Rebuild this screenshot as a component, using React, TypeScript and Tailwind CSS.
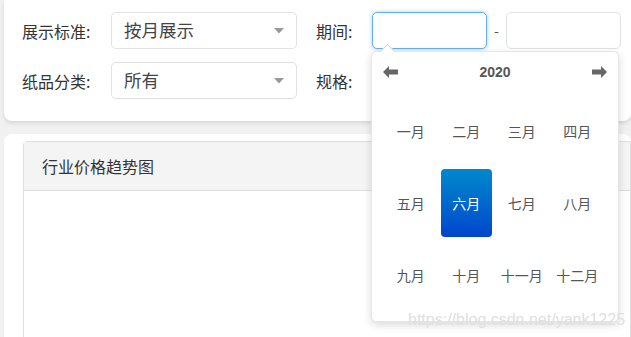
import React from "react";

const months = ["一月", "二月", "三月", "四月", "五月", "六月", "七月", "八月", "九月", "十月", "十一月", "十二月"];

function Caret() {
  return (
    <svg width="10" height="6" viewBox="0 0 10 6" className="shrink-0">
      <path d="M0 0 L10 0 L5 5.5 Z" fill="#999" />
    </svg>
  );
}

function Arrow({ dir }: { dir: "left" | "right" }) {
  return (
    <svg width="16" height="12" viewBox="0 0 16 12" className={dir === "right" ? "rotate-180" : ""}>
      <path d="M0 6 L6 0 L6 3.5 L15 3.5 L15 8.5 L6 8.5 L6 12 Z" fill="#666" />
    </svg>
  );
}

function Select({ value }: { value: string }) {
  return (
    <div className="flex h-[37px] w-[186px] items-center justify-between rounded-[5px] border border-[#e2e2e2] bg-white pl-3 pr-[12px]">
      <span className="text-[17.5px] text-[#444]">{value}</span>
      <Caret />
    </div>
  );
}

function MonthPicker() {
  return (
    <div className="absolute left-[-1px] top-[39px] z-10 w-[248px] rounded-[5px] border border-[#e6e6e6] bg-white px-[11px] pb-[12px] shadow-[0_3px_8px_rgba(0,0,0,0.15)]">
      <div className="absolute left-[10px] top-[-6px] h-[11px] w-[11px] rotate-45 border-l border-t border-[#d6d6d6] bg-white" />
      <div className="flex h-[40px] items-center justify-between pr-0">
        <Arrow dir="left" />
        <span className="font-['Liberation_Sans',sans-serif] text-[14px] font-bold text-[#555]">2020</span>
        <Arrow dir="right" />
      </div>
      <div className="mt-[5px] grid grid-cols-4 gap-y-[4px] pr-[2px]">
        {months.map((m) => (
          <div key={m} className="flex h-[68px] items-center justify-center">
            {m === "六月" ? (
              <div className="flex h-[68px] w-[51px] items-center justify-center rounded-[4px] bg-gradient-to-b from-[#0088cc] to-[#0044cc] text-[14px] text-white">
                {m}
              </div>
            ) : (
              <span className="text-[14px] text-[#555]">{m}</span>
            )}
          </div>
        ))}
      </div>
    </div>
  );
}

export default function App() {
  return (
    <div className="relative h-[337px] overflow-hidden bg-[#f1f1f1] font-['Noto_Sans_CJK_SC','Liberation_Sans',sans-serif]">
      {/* Filter card */}
      <div className="ml-1 h-[121px] rounded-b-[8px] bg-white pl-[18px] pt-3 shadow-[0_2px_4px_rgba(0,0,0,0.12)]">
        <div className="flex h-[37px] items-center">
          <span className="w-[89px] text-[16px] text-[#333]">展示标准:</span>
          <Select value="按月展示" />
          <span className="ml-[19px] w-[56px] text-[16px] text-[#333]">期间:</span>
          <div className="relative">
            <div className="h-[37px] w-[115px] rounded-[5px] border border-[#66afe9] bg-white shadow-[0_0_4px_rgba(102,175,233,0.6)]" />
            <MonthPicker />
          </div>
          <span className="w-[19px] text-center text-[14px] text-[#555]">-</span>
          <div className="h-[37px] w-[115px] rounded-[5px] border border-[#e2e2e2] bg-white" />
        </div>
        <div className="mt-[13px] flex h-[37px] items-center">
          <span className="w-[89px] text-[16px] text-[#333]">纸品分类:</span>
          <Select value="所有" />
          <span className="ml-[19px] w-[56px] text-[16px] text-[#333]">规格:</span>
        </div>
      </div>

      {/* Chart card */}
      <div className="ml-1 mt-[13px] h-[210px] rounded-t-[8px] bg-white pl-[19px] pt-[7px]">
        <div className="h-full rounded-tl-[4px] border border-[#dedede]">
          <div className="flex h-[49px] items-center border-b border-[#dedede] bg-[#f4f4f4] pl-[18px]">
            <span className="text-[16px] text-[#333]">行业价格趋势图</span>
          </div>
        </div>
      </div>

      <span className="pointer-events-none absolute left-[408px] top-[308px] z-20 font-['Liberation_Sans',sans-serif] text-[16px] text-[#e0e0e0]">
        https://blog.csdn.net/yank1225
      </span>
    </div>
  );
}
